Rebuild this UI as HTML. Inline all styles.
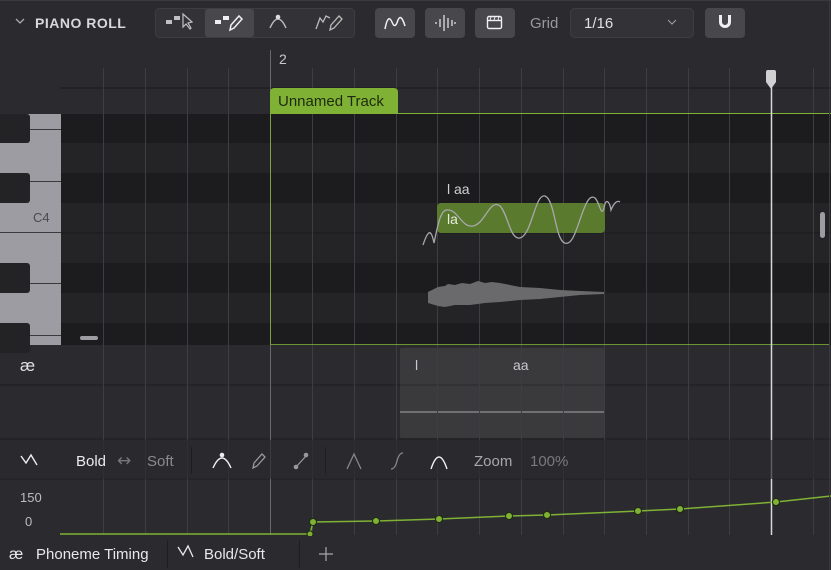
<!DOCTYPE html>
<html><head><meta charset="utf-8"><style>
body{margin:0;width:831px;height:570px;overflow:hidden;background:#2b2a2e;font-family:"Liberation Sans","DejaVu Sans",sans-serif}
svg{position:absolute;left:0;top:0}
</style></head><body>
<svg width="831" height="570" viewBox="0 0 831 570" xmlns="http://www.w3.org/2000/svg" font-family="Liberation Sans, DejaVu Sans, sans-serif">
<rect width="831" height="570" fill="#2b2a2e"/>
<rect x="0" y="50" width="831" height="64" fill="#2b2a2e"/>
<line x1="60" y1="88" x2="831" y2="88" stroke="#18181a" stroke-width="1"/>
<g>
<rect x="0" y="114" width="831" height="29" fill="#1c1c1e"/>
<rect x="0" y="143" width="831" height="30" fill="#242426"/>
<rect x="0" y="173" width="831" height="30" fill="#1c1c1e"/>
<rect x="0" y="203" width="831" height="60" fill="#242426"/>
<rect x="0" y="263" width="831" height="30" fill="#1c1c1e"/>
<rect x="0" y="293" width="831" height="30" fill="#242426"/>
<rect x="0" y="323" width="831" height="22" fill="#1c1c1e"/>
<line x1="0" y1="233" x2="831" y2="233" stroke="#1a1a1c"/>
</g>
<rect x="0" y="345" width="831" height="95" fill="#2b2a2e"/>
<line x1="0" y1="385" x2="831" y2="385" stroke="#1e1e20"/>
<line x1="0" y1="439" x2="831" y2="439" stroke="#1e1e20"/>
<line x1="0" y1="479" x2="831" y2="479" stroke="#1e1e20"/>
<rect x="400" y="348" width="204" height="90" fill="#3a393c" rx="2"/>
<line x1="400" y1="385" x2="604" y2="385" stroke="#2a292c"/>
<line x1="400" y1="412" x2="604" y2="412" stroke="#707073" stroke-width="2"/>
<g stroke="#3e3e42" stroke-width="1">
<line x1="103.5" y1="68" x2="103.5" y2="535"/><line x1="145.5" y1="68" x2="145.5" y2="535"/>
<line x1="187.5" y1="68" x2="187.5" y2="535"/><line x1="228.5" y1="68" x2="228.5" y2="535"/>
<line x1="312.5" y1="68" x2="312.5" y2="535"/><line x1="354.5" y1="68" x2="354.5" y2="535"/>
<line x1="396.5" y1="68" x2="396.5" y2="535"/><line x1="437.5" y1="68" x2="437.5" y2="535"/>
<line x1="479.5" y1="68" x2="479.5" y2="535"/><line x1="521.5" y1="68" x2="521.5" y2="535"/>
<line x1="563.5" y1="68" x2="563.5" y2="535"/><line x1="604.5" y1="68" x2="604.5" y2="535"/>
<line x1="646.5" y1="68" x2="646.5" y2="535"/><line x1="688.5" y1="68" x2="688.5" y2="535"/>
<line x1="729.5" y1="68" x2="729.5" y2="535"/><line x1="813.5" y1="68" x2="813.5" y2="535"/>
</g>
<line x1="270.5" y1="48" x2="270.5" y2="535" stroke="#6a6a6e"/>
<text x="279" y="64" fill="#c8c8cc" font-size="14">2</text>
<rect x="270" y="113" width="561" height="1" fill="#7fb234"/>
<path d="M270.5 114 V344.5 H829.5 V113" fill="none" stroke="#7fb234" stroke-opacity="0.8"/>
<path d="M270 113 V92 a4 4 0 0 1 4-4 H394 a4 4 0 0 1 4 4 V113 Z" fill="#7fb234"/>
<text x="278" y="106" fill="#1e2a10" font-size="15">Unnamed Track</text>
<rect x="0" y="114" width="61" height="231" fill="#9d9ca3"/>
<g fill="#232325">
<rect x="-4" y="114" width="34" height="29" rx="3"/>
<rect x="-4" y="173" width="34" height="30" rx="3"/>
<rect x="-4" y="263" width="34" height="30" rx="3"/>
<rect x="-4" y="323" width="34" height="30" rx="3"/>
</g>
<g stroke="#3a3a3c"><line x1="30" y1="129.5" x2="61" y2="129.5"/><line x1="30" y1="181.5" x2="61" y2="181.5"/><line x1="0" y1="232.5" x2="61" y2="232.5"/><line x1="30" y1="283.5" x2="61" y2="283.5"/><line x1="30" y1="335.5" x2="61" y2="335.5"/></g>
<text x="33" y="222" fill="#4a4a50" font-size="13">C4</text>
<rect x="80" y="336" width="18" height="4" rx="2" fill="#9d9ca3"/>
<text x="447" y="194" fill="#d0d0d4" font-size="14">l aa</text>
<rect x="437" y="203" width="168" height="30" rx="4" fill="#5a7a2e"/>
<text x="447" y="224" fill="#e8ecdf" font-size="14">la</text>
<path d="M423 245 C428 230 431 228 434 243 C437 230 440 208 448 210 C458 210 462 228 473 226 C485 224 490 198 500 206 C508 214 510 240 520 238 C532 235 535 193 545 196 C556 200 555 248 568 243 C578 240 584 190 595 198 C600 203 601 218 604 208 C606 196 610 203 611 210 C614 203 617 200 620 202" fill="none" stroke="#a8a8ac" stroke-width="1.3"/>
<path d="M428 292 L438 287 L445 286 L448 284 L455 285 L462 283 L470 284 L478 281 L485 283 L492 282 L500 283 L510 285 L520 287 L540 288 L560 290 L580 291 L604 292 L604 294 L580 295 L560 297 L540 299 L520 300 L500 302 L485 303 L470 305 L455 305 L445 307 L438 306 L428 303 Z" fill="#6a6a6d"/>
<rect x="820" y="212" width="5" height="26" rx="2.5" fill="#9d9ca3"/>
<line x1="771.5" y1="80" x2="771.5" y2="535" stroke="#d8d8da" stroke-width="1.5"/>
<path d="M766 72 a2 2 0 0 1 2-2 H774 a2 2 0 0 1 2 2 V82 L771 89 L766 82 Z" fill="#d0d0d2"/>
<text x="20" y="371" fill="#e0e0e4" font-size="17">æ</text>
<text x="415" y="370" fill="#c8c8cc" font-size="14">l</text>
<text x="513" y="370" fill="#c8c8cc" font-size="14">aa</text>
<rect x="0" y="0" width="831" height="50" fill="#2b2a2e"/>
<line x1="0" y1="0.5" x2="831" y2="0.5" stroke="#3a393d"/>
<path d="M16 19 l4 4 4-4" fill="none" stroke="#aaa" stroke-width="1.3"/>
<text x="35" y="28" fill="#d8d8dc" font-size="14" font-weight="bold" letter-spacing="0.5">PIANO ROLL</text>
<rect x="155.5" y="8.5" width="199" height="29" rx="4" fill="#333236" stroke="#3e3d41"/>
<rect x="205" y="9" width="49" height="28" rx="3" fill="#48474c"/>
<g fill="#c0c0c4"><rect x="166" y="20" width="6" height="4"/><rect x="174" y="16" width="6" height="4"/></g>
<path d="M183 14 L183 27 L186 24 L190 29 L191 28 L188 23 L192 22 Z" fill="none" stroke="#c0c0c4" stroke-width="1.2"/>
<g fill="#f0f0f2"><rect x="215" y="20" width="6" height="4"/><rect x="223" y="16" width="6" height="4"/></g>
<path d="M230 30 L231 25 L239 16 L242 19 L234 28 Z" fill="none" stroke="#f0f0f2" stroke-width="1.5"/>
<path d="M270 28 Q278 10 286 28" fill="none" stroke="#bbb" stroke-width="1.4"/><circle cx="278" cy="17" r="2.3" fill="#ddd"/>
<path d="M316 29 L320 18 L323 22 L326 16 L330 18" fill="none" stroke="#bbb" stroke-width="1.3"/>
<path d="M330 30 L331 25 L339 16 L342 19 L334 28 Z" fill="none" stroke="#bbb" stroke-width="1.3"/>
<rect x="375" y="8" width="40" height="30" rx="4" fill="#48474c"/>
<path d="M385 29 Q388 13 392 22 Q395 30 398 20 Q401 13 405 26" fill="none" stroke="#f0f0f2" stroke-width="1.5"/>
<rect x="425" y="8" width="40" height="30" rx="4" fill="#48474c"/>
<g stroke="#e0e0e2" stroke-width="1.3"><line x1="436" y1="22" x2="436" y2="24"/><line x1="440" y1="19" x2="440" y2="27"/><line x1="444" y1="15" x2="444" y2="31"/><line x1="448" y1="18" x2="448" y2="28"/><line x1="452" y1="20" x2="452" y2="26"/><line x1="455" y1="22" x2="455" y2="24"/></g>
<rect x="475" y="8" width="40" height="30" rx="4" fill="#48474c"/>
<rect x="487.5" y="16.5" width="14" height="12" rx="1.5" fill="none" stroke="#f0f0f2" stroke-width="1.4"/><line x1="487" y1="20.5" x2="502" y2="20.5" stroke="#f0f0f2" stroke-width="1.4"/><path d="M491 17 l-1 3 M495 17 l-1 3 M499 17 l-1 3" stroke="#f0f0f2"/>
<text x="530" y="28" fill="#9a9a9e" font-size="15">Grid</text>
<rect x="570.5" y="8.5" width="123" height="29" rx="4" fill="#333236" stroke="#3e3d41"/>
<text x="584" y="28" fill="#e0e0e4" font-size="15">1/16</text>
<path d="M668 20 l4 4 4-4" fill="none" stroke="#999" stroke-width="1.2"/>
<rect x="705" y="8" width="40" height="30" rx="4" fill="#48474c"/>
<path d="M719 15 V22 a6 6 0 0 0 12 0 V15 H728 V22 a3 3 0 0 1-6 0 V15 Z" fill="#f0f0f2"/>
<rect x="0" y="440" width="831" height="39" fill="#2b2a2e" fill-opacity="0.7"/>
<path d="M21 456 L26 463 L31 455 L37 465" fill="none" stroke="#eee" stroke-width="1.4"/>
<text x="76" y="466" fill="#eaeaee" font-size="15">Bold</text>
<text x="117" y="466" fill="#777" font-size="17" font-family="DejaVu Sans, sans-serif">↔</text>
<text x="147" y="466" fill="#8a8a8e" font-size="15">Soft</text>
<line x1="191.5" y1="447" x2="191.5" y2="474" stroke="#1e1e20"/>
<path d="M213 468 Q222 448 231 468" fill="none" stroke="#eee" stroke-width="1.4"/><circle cx="222" cy="455" r="2.3" fill="#eee"/>
<path d="M253 468 L254 463 L262 454 L265 457 L257 466 Z" fill="none" stroke="#999" stroke-width="1.3"/>
<line x1="296" y1="467" x2="306" y2="456" stroke="#999" stroke-width="1.3"/><circle cx="296" cy="467" r="2.3" fill="#999"/><circle cx="306" cy="455" r="2.3" fill="#999"/>
<line x1="325.5" y1="447" x2="325.5" y2="474" stroke="#1e1e20"/>
<path d="M347 469 L354 454 L361 469" fill="none" stroke="#888" stroke-width="1.3"/>
<path d="M391 469 Q395 469 397 461 Q399 453 403 453" fill="none" stroke="#888" stroke-width="1.3"/>
<path d="M431 469 Q439 445 447 469" fill="none" stroke="#eee" stroke-width="1.4"/>
<text x="474" y="466" fill="#a8a8ac" font-size="15">Zoom</text>
<text x="530" y="466" fill="#7a7a7e" font-size="15">100%</text>
<text x="20" y="502" fill="#bcbcc0" font-size="13">150</text>
<text x="25" y="526" fill="#bcbcc0" font-size="13">0</text>
<path d="M60 534 H310 L313 522 L376 521 L439 519 L509 516 L547 515 L638 511 L680 509 L776 502 L831 496" fill="none" stroke="#7fb234" stroke-width="1.5"/>
<path d="M310 534 L313 522" stroke="#7fb234" stroke-dasharray="2 2"/>
<g fill="#7fb234" stroke="#1e2a10" stroke-width="1"><circle cx="313" cy="522" r="3.5"/><circle cx="376" cy="521" r="3.5"/><circle cx="439" cy="519" r="3.5"/><circle cx="509" cy="516" r="3.5"/><circle cx="547" cy="515" r="3.5"/><circle cx="638" cy="511" r="3.5"/><circle cx="680" cy="509" r="3.5"/><circle cx="776" cy="502" r="3.5"/><circle cx="310" cy="534" r="3"/></g>
<rect x="0" y="536" width="831" height="34" fill="#2b2a2e"/>
<text x="9" y="559" fill="#e8e8ec" font-size="16">æ</text>
<text x="36" y="559" fill="#e8e8ec" font-size="15">Phoneme Timing</text>
<line x1="167.5" y1="540" x2="167.5" y2="568" stroke="#1e1e20"/>
<path d="M178 547 L183 555 L188 546 L193 557" fill="none" stroke="#e8e8ec" stroke-width="1.3"/>
<text x="204" y="559" fill="#e8e8ec" font-size="15">Bold/Soft</text>
<line x1="299.5" y1="540" x2="299.5" y2="568" stroke="#1e1e20"/>
<path d="M326 547 V561 M319 554 H333" stroke="#aaa" stroke-width="1.2"/>
<line x1="829.5" y1="0" x2="829.5" y2="570" stroke="#3a393d"/>
</svg>
</body></html>
